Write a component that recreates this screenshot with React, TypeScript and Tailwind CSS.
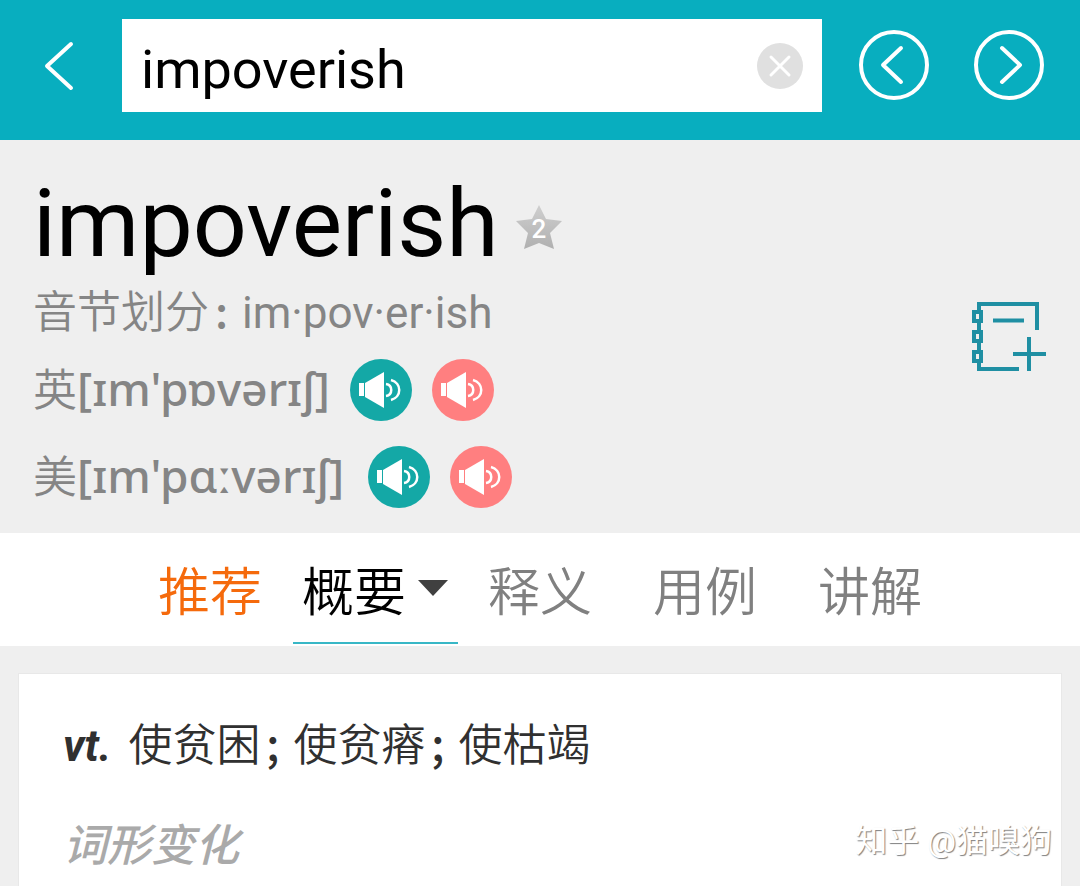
import { useState } from "react"

const tabs = ["推荐", "概要", "释义", "用例", "讲解"]

const phonetics = [
  { region: "英", ipa: "ɪm'pɒvərɪʃ", width: "w-[317px]" },
  { region: "美", ipa: "ɪm'pɑːvərɪʃ", width: "w-[335px]" },
]

function Speaker({ label, className }: { label: string; className: string }) {
  return (
    <button aria-label={label} className={`size-[62px] rounded-full cursor-pointer ${className}`}>
      <svg viewBox="0 0 62 62" className="size-full" fill="none" stroke="white">
        <path d="M9 24h5v13h-5z" fill="white" stroke="none" />
        <path d="M15 24 34 13v36L15 38z" fill="white" stroke="none" />
        <path d="M36 25c7 1 7 11 0 12" strokeWidth="2.5" />
        <path d="M41 21c11 3 11 17 0 20" strokeWidth="2.5" />
      </svg>
    </button>
  )
}

function Mark({ children }: { children: string }) {
  return <span className="inline-block w-[33px] pr-2 text-center font-medium font-['Noto_Sans_CJK_SC',sans-serif] leading-none">{children}</span>
}

export default function App() {
  const [word, setWord] = useState("impoverish")
  const [active, setActive] = useState("概要")

  return (
    <div className="relative min-h-screen flex flex-col overflow-hidden bg-[#efefef] font-[Roboto,'Noto_Sans_CJK_SC',sans-serif]">
      <header className="h-[140px] shrink-0 bg-[#08aebf] flex items-start">
        <button aria-label="返回" className="w-[122px] h-[132px] pl-[42px] cursor-pointer">
          <svg viewBox="0 0 34 52" className="w-[34px] h-[52px]" fill="none" stroke="white" strokeWidth="4" strokeLinecap="round" strokeLinejoin="round">
            <path d="M29 4 5 26l24 22" />
          </svg>
        </button>
        <div className="flex-1 min-w-0 mt-[19px] h-[93px] pl-[19px] pr-[19px] bg-white flex items-center">
          <input
            aria-label="查词"
            value={word}
            onChange={(e) => setWord(e.target.value)}
            className="flex-1 min-w-0 h-full pt-2 text-[54px] text-black outline-none"
          />
          <button aria-label="清除" onClick={() => setWord("")} className="cursor-pointer">
            <svg viewBox="0 0 46 46" className="size-[46px]">
              <circle cx="23" cy="23" r="23" fill="#e0e0e0" />
              <path d="m14 14 18 18M32 14 14 32" stroke="white" strokeWidth="3" strokeLinecap="round" />
            </svg>
          </button>
        </div>
        <div className="h-[130px] pl-[36px] pr-[35px] flex items-center gap-[43px]">
          <button aria-label="上一个" className="cursor-pointer">
            <svg viewBox="0 0 72 72" className="size-[72px]" fill="none" stroke="white" strokeWidth="4" strokeLinecap="round" strokeLinejoin="round">
              <circle cx="36" cy="36" r="33" />
              <path d="M43 19 25 36l18 17" />
            </svg>
          </button>
          <button aria-label="下一个" className="cursor-pointer">
            <svg viewBox="0 0 72 72" className="size-[72px]" fill="none" stroke="white" strokeWidth="4" strokeLinecap="round" strokeLinejoin="round">
              <circle cx="36" cy="36" r="33" />
              <path d="M29 19l18 17-18 17" />
            </svg>
          </button>
        </div>
      </header>

      <section className="h-[393px] shrink-0 px-[33px] pt-6 flex items-start justify-between text-[#858585]">
        <div>
          <div className="flex items-center gap-4">
            <h1 className="text-[95px] leading-[120px] text-black">impoverish</h1>
            <svg viewBox="0 0 48 48" className="size-[48px] mt-2">
              <defs>
                <linearGradient id="star" x1="0" y1="0" x2="0" y2="1">
                  <stop offset="0" stopColor="#cfcfcf" />
                  <stop offset="1" stopColor="#b0b0b0" />
                </linearGradient>
              </defs>
              <path d="M24 1l7 14 16 2-12 12 4 16-15-6-15 6 4-16L1 17l16-2z" fill="url(#star)" />
              <text x="24" y="34" textAnchor="middle" fontSize="26" fontWeight="500" fill="white">2</text>
            </svg>
          </div>
          <p className="h-[58px] text-[44px] leading-[58px] whitespace-nowrap">
            <span className="font-[350]">音节划分</span><Mark>:</Mark>im·pov·er·ish
          </p>
          <div className="mt-[17px] flex flex-col gap-[25px]">
            {phonetics.map((p) => (
              <div key={p.region} className="h-[62px] flex items-center">
                <p className={`pt-2 leading-[62px] whitespace-nowrap ${p.width}`}>
                  <span className="text-[44px] font-[350]">{p.region}</span>
                  <span className="text-[46px] font-medium font-['Noto_Sans',sans-serif]">[{p.ipa}]</span>
                </p>
                <Speaker label={`${p.region}音`} className="mr-[20px] bg-[#14a8a6]" />
                <Speaker label={`${p.region}音跟读`} className="bg-[#ff7f80]" />
              </div>
            ))}
          </div>
        </div>
        <button aria-label="加入生词本" className="mt-[136px] cursor-pointer">
          <svg viewBox="0 0 76 74" className="w-[76px] h-[74px]" fill="none" stroke="#1f8fa3" strokeWidth="4">
            <path d="M66 30V4H8v65h40" />
            <path d="M22 20.500h31M58 37v34M42 54h33" />
            <path d="M3 12h7v9H3zM3 32h7v9H3zM3 52h7v9H3z" fill="#efefef" />
          </svg>
        </button>
      </section>

      <nav className="h-[113px] shrink-0 bg-white flex justify-center">
        {tabs.map((tab) => (
          <button
            key={tab}
            onClick={() => setActive(tab)}
            className={`w-[165px] h-[111px] pt-3 flex items-center justify-center gap-3 border-b-2 text-[52px] font-[350] cursor-pointer ${
              active === tab ? "border-[#38b7c6] text-black" : tab === "推荐" ? "border-transparent text-[#f56a0c]" : "border-transparent text-[#808080]"
            }`}
          >
            {tab}
            {tab === "概要" && (
              <svg viewBox="0 0 30 16" className="w-[30px] h-[16px] shrink-0 -mt-3">
                <path d="M0 0h30L15 16z" fill="#404040" />
              </svg>
            )}
          </button>
        ))}
      </nav>

      <main className="flex-1 mx-[18px] mt-[27px] pl-[44px] pt-10 bg-white border border-b-0 border-[#e8e8e8]">
        <p className="text-[44px] leading-[64px] text-[#303030] font-[350] whitespace-nowrap">
          <b className="mr-[17px] font-bold italic">vt.</b>使贫困<Mark>;</Mark>使贫瘠<Mark>;</Mark>使枯竭
        </p>
        <h2 className="mt-9 text-[44px] leading-[64px] font-medium italic text-[#aaaaaa]">词形变化</h2>
      </main>

      <div className="absolute right-7 bottom-5 text-[32px] leading-[50px] text-white [text-shadow:1px_1px_1px_#808080]">知乎 @猫嗅狗</div>
    </div>
  )
}
